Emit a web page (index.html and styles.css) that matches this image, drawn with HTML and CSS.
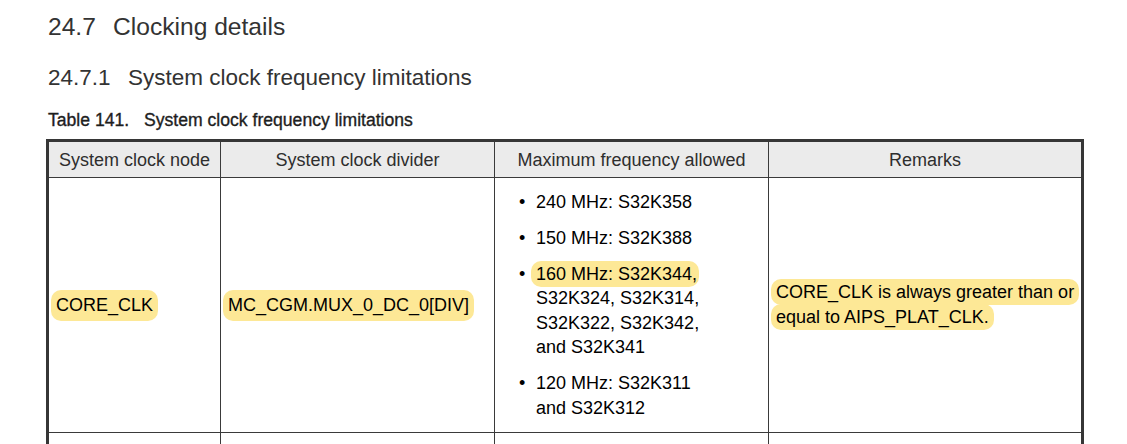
FILE: index.html
```html
<!DOCTYPE html>
<html lang="en">
<head>
<meta charset="utf-8">
<title>Clocking details</title>
<link rel="stylesheet" href="styles.css">
</head>
<body>
<main class="page">
  <h1 class="h1"><span class="num1">24.7</span>Clocking details</h1>
  <h2 class="h2"><span class="num2">24.7.1</span>System clock frequency limitations</h2>
  <p class="caption"><span class="num3">Table 141.</span>System clock frequency limitations</p>
  <div class="table">
    <div class="cell head c1">System clock node</div>
    <div class="cell head">System clock divider</div>
    <div class="cell head">Maximum frequency allowed</div>
    <div class="cell head">Remarks</div>

    <div class="cell body c1"><span class="hl">CORE_CLK</span></div>
    <div class="cell body"><span class="hl">MC_CGM.MUX_0_DC_0[DIV]</span></div>
    <div class="cell body list-cell">
      <ul class="list">
        <li>240 MHz: S32K358</li>
        <li>150 MHz: S32K388</li>
        <li><span class="hl hl-tight">160 MHz: S32K344,</span><br>S32K324, S32K314,<br>S32K322, S32K342,<br>and S32K341</li>
        <li>120 MHz: S32K311<br>and S32K312</li>
      </ul>
    </div>
    <div class="cell body remarks"><p class="rem"><span class="hl">CORE_CLK is always greater than or<br>equal to AIPS_PLAT_CLK.</span></p></div>

    <div class="cell next c1"></div>
    <div class="cell next"></div>
    <div class="cell next"></div>
    <div class="cell next"></div>
  </div>
</main>
</body>
</html>
```

FILE: styles.css
```css
html {
  overflow: hidden;
}

body {
  margin: 0;
  background: #ffffff;
  font-family: "Liberation Sans", Arial, sans-serif;
}

.page {
  padding: 12px 0 0 46px;
}

.h1 {
  margin: 0;
  padding-left: 2px;
  font-size: 24.6px;
  line-height: 30px;
  font-weight: normal;
  color: #333333;
  white-space: nowrap;
}

.num1 {
  display: inline-block;
  width: 65px;
}

.h2 {
  margin: 23px 0 0;
  padding-left: 2px;
  font-size: 22.5px;
  line-height: 26px;
  font-weight: normal;
  color: #333333;
  white-space: nowrap;
}

.num2 {
  display: inline-block;
  width: 80px;
}

.caption {
  margin: 18px 0 0;
  padding-left: 2px;
  font-size: 17.6px;
  line-height: 22px;
  color: #1e1e1e;
  -webkit-text-stroke: 0.35px #1e1e1e;
  white-space: nowrap;
}

.num3 {
  display: inline-block;
  width: 96px;
}

.table {
  margin-top: 8px;
  width: 1038px;
  box-sizing: border-box;
  border: 3px solid #363636;
  border-bottom: none;
  display: grid;
  grid-template-columns: 171px 274px 274px 313px;
  grid-template-rows: 36px 255px 40px;
}

.cell {
  box-sizing: border-box;
  border-left: 1px solid #3a3a3a;
  border-bottom: 1px solid #3a3a3a;
  font-size: 18px;
}

.cell.c1 {
  border-left: none;
}

.head {
  background: #ebebeb;
  color: #2e2e2e;
  display: flex;
  align-items: center;
  justify-content: center;
  line-height: 22px;
}

.body {
  color: #000000;
  display: flex;
  align-items: center;
  padding-left: 7px;
  line-height: 25px;
  white-space: nowrap;
}

.next {
  border-bottom: none;
}

.hl {
  background: #fde896;
  border-radius: 10px;
  padding: 3px 5px;
  margin: 0 -5px;
  -webkit-box-decoration-break: clone;
  box-decoration-break: clone;
}

.hl-tight {
  padding-right: 2px;
  margin-right: -2px;
}

.list-cell {
  padding-left: 41px;
}

.list {
  margin: 0;
  padding: 0;
  list-style: none;
  line-height: 24.5px;
}

.list li {
  position: relative;
}

.list li + li {
  margin-top: 11.5px;
}

.list li::before {
  content: "\2022";
  position: absolute;
  left: -17px;
  top: 0;
}

.remarks {
  padding-right: 2px;
}

.rem {
  margin: 0;
  line-height: 25px;
}
```
